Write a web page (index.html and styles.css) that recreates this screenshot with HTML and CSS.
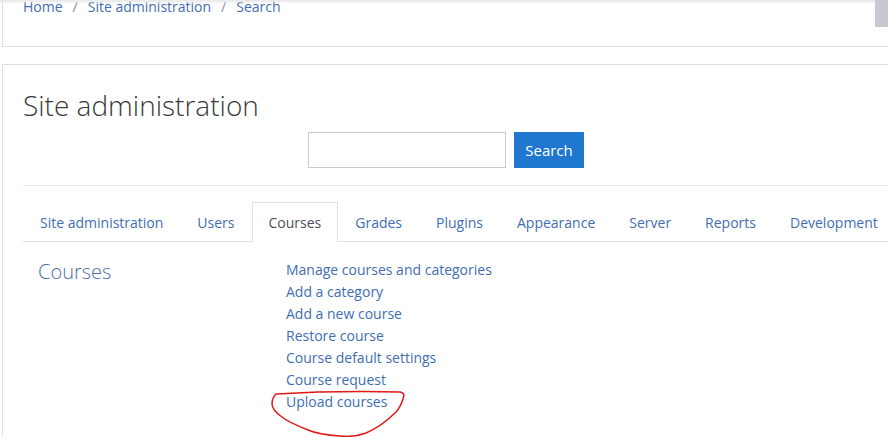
FILE: index.html
```html
<!DOCTYPE html>
<html lang="en">
<head>
<meta charset="utf-8">
<title>Site administration</title>
<link rel="stylesheet" href="styles.css">
</head>
<body>
<div class="top-shadow"></div>
<div class="scroll-thumb"></div>

<header class="page-header">
  <nav class="breadcrumb">
    <a href="#">Home</a><span class="sep">/</span><a href="#">Site administration</a><span class="sep">/</span><a href="#">Search</a>
  </nav>
</header>

<main class="card">
  <h1 class="title">Site administration</h1>
  <form class="search-row">
    <input class="search-input" type="text">
    <button class="search-btn" type="button">Search</button>
  </form>
  <hr class="divider">
  <ul class="tabs">
    <li class="tab"><a href="#">Site administration</a></li>
    <li class="tab"><a href="#">Users</a></li>
    <li class="tab active"><a href="#">Courses</a></li>
    <li class="tab"><a href="#">Grades</a></li>
    <li class="tab"><a href="#">Plugins</a></li>
    <li class="tab"><a href="#">Appearance</a></li>
    <li class="tab"><a href="#">Server</a></li>
    <li class="tab"><a href="#">Reports</a></li>
    <li class="tab"><a href="#">Development</a></li>
  </ul>
  <section class="section">
    <h2 class="section-title">Courses</h2>
    <ul class="links">
      <li><a href="#">Manage courses and categories</a></li>
      <li><a href="#">Add a category</a></li>
      <li><a href="#">Add a new course</a></li>
      <li><a href="#">Restore course</a></li>
      <li><a href="#">Course default settings</a></li>
      <li><a href="#">Course request</a></li>
      <li class="circled"><a href="#">Upload courses</a>
        <svg class="scribble" viewBox="0 0 140 54" width="140" height="54">
          <path d="M6 7 C40 5 90 4 130 5 C135 6 134 9 133 12 C131 18 130 21 126 25 C118 33 110 40 96 46 C85 50 78 50 70 49 C55 48 45 46 38 43 C28 39 18 35 12 30 C5 25 2 21 2 17 C2 12 4 9 6 7" fill="none" stroke="#e01818" stroke-width="1.5" stroke-linecap="round" stroke-linejoin="round"/>
        </svg>
      </li>
    </ul>
  </section>
</main>
</body>
</html>
```

FILE: styles.css
```css
html, body {
  margin: 0;
  padding: 0;
  background: #fff;
  overflow: hidden;
}
body {
  font-family: "Open Sans", "Noto Sans", sans-serif;
  font-size: 14px;
  color: #373a3c;
  position: relative;
  width: 888px;
  height: 437px;
}
a {
  color: #3f6eb2;
  text-decoration: none;
}
.top-shadow {
  position: absolute;
  left: 0;
  top: 0;
  width: 100%;
  height: 4px;
  background: linear-gradient(#e6e6e6, rgba(255,255,255,0));
  z-index: 2;
}
.scroll-thumb {
  position: absolute;
  right: 0;
  top: 0;
  width: 13px;
  height: 27px;
  background: #c6cad0;
  z-index: 3;
}
.page-header {
  display: flow-root;
  margin: 0 -30px 0 2px;
  border: 1px solid #e0e0e0;
  border-top: none;
  height: 46px;
}
.breadcrumb {
  display: flex;
  align-items: center;
  padding-left: 20px;
  margin-top: -3px;
  font-size: 14px;
  line-height: 20px;
}
.breadcrumb .sep {
  color: #868e96;
  padding: 0 10px;
}
.card {
  margin: 17px -30px 0 2px;
  border: 1px solid #e0e0e0;
  padding: 20px 0 0 20px;
  height: 360px;
}
.title {
  margin: 0;
  font-size: 28px;
  font-weight: 300;
  line-height: 40px;
  color: #3a3a3a;
}
.search-row {
  display: flex;
  gap: 8px;
  margin: 7px 0 0 285px;
}
.search-input {
  width: 198px;
  height: 36px;
  box-sizing: border-box;
  border: 1px solid #ccc;
  margin: 0;
}
.search-btn {
  width: 70px;
  height: 36px;
  border: none;
  background: #1f77cf;
  color: #fff;
  font-family: inherit;
  font-size: 15px;
  margin: 0;
  padding: 0;
}
.divider {
  border: none;
  border-top: 1px solid #e6e6e6;
  margin: 17px 0 0 0;
}
.tabs {
  list-style: none;
  margin: 16px 0 0 0;
  padding: 0;
  display: flex;
  border-bottom: 1px solid #dee2e6;
  white-space: nowrap;
}
.tab {
  margin-bottom: -1px;
  border: 1px solid transparent;
}
.tab a {
  display: block;
  padding: 1px 16px 0;
  line-height: 37px;
  font-size: 14px;
}
.tab.active {
  border-color: #dee2e6;
  border-bottom-color: #fff;
  background: #fff;
}
.tab.active a {
  color: #495057;
}
.section {
  display: flex;
  padding-top: 17px;
}
.section-title {
  margin: 0;
  width: 248px;
  padding-left: 15px;
  font-size: 20px;
  font-weight: 300;
  color: #4a70a8;
  line-height: 26px;
}
.links {
  list-style: none;
  margin: 0;
  padding: 0;
  font-size: 14px;
  line-height: 22px;
}
.circled {
  position: relative;
}
.scribble {
  position: absolute;
  left: -16px;
  top: -4px;
}
```
